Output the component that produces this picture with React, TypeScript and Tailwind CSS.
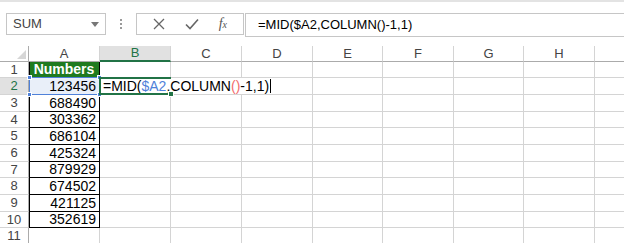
import React from "react";

const colLetters = ["A", "B", "C", "D", "E", "F", "G", "H"];
const colWidths = ["w-[71px]", "w-[71px]", "w-[71px]", "w-[71px]", "w-[70px]", "w-[71px]", "w-[70px]", "w-[71px]"];
const rowHeights = ["h-[16px]", "h-[17px]", "h-[17px]", "h-[16px]", "h-[17px]", "h-[17px]", "h-[16px]", "h-[17px]", "h-[17px]", "h-[16px]", "h-[17px]"];
const values = ["Numbers", "123456", "688490", "303362", "686104", "425324", "879929", "674502", "421125", "352619", ""];

function Toolbar() {
  return (
    <div className="flex items-start pt-[11px] h-[46px] border-t-2 border-[#e3e3e3]">
      <div className="ml-[6px] w-[100px] h-[22px] border border-[#c6c6c6] flex items-center pl-[6px] pr-[6px] text-[13px] text-[#444]">
        <span className="flex-1">SUM</span>
        <svg width="8" height="5" viewBox="0 0 8 5">
          <path d="M0 0h8L4 5z" fill="#777" />
        </svg>
      </div>
      <div className="w-[30px] h-[22px] flex flex-col items-center justify-center gap-[2px]">
        <span className="w-[2px] h-[2px] bg-[#9a9a9a]" />
        <span className="w-[2px] h-[2px] bg-[#9a9a9a]" />
        <span className="w-[2px] h-[2px] bg-[#9a9a9a]" />
      </div>
      <div className="w-[108px] h-[22px] border border-[#c6c6c6] flex items-center justify-around px-[6px]">
        <svg width="12" height="12" viewBox="0 0 12 12">
          <path d="M1 1l10 10M11 1L1 11" stroke="#666" strokeWidth="1.3" />
        </svg>
        <svg width="14" height="12" viewBox="0 0 14 12">
          <path d="M1 6.5l4 4L13 1.5" stroke="#666" strokeWidth="1.6" fill="none" />
        </svg>
        <span className="font-['Liberation_Serif'] italic text-[14px] text-[#555] leading-none">
          f<span className="text-[10px]">x</span>
        </span>
      </div>
      <div className="ml-[1px] flex-1 h-[24px] border-y border-l border-[#c6c6c6] flex items-center pl-[12px] text-[13px] text-black">
        =MID($A2,COLUMN()-1,1)
      </div>
    </div>
  );
}

function HeaderRow() {
  return (
    <div className="flex h-[16px]">
      <div className="w-[29px] shrink-0 border-r border-b border-[#ababab] bg-white flex items-end justify-end p-[2px]">
        <svg width="9" height="9" viewBox="0 0 9 9">
          <path d="M9 0v9H0z" fill="#d6d6d6" />
        </svg>
      </div>
      {colLetters.map((c, i) => {
        const sel = c === "B";
        return (
          <div
            key={c}
            className={`${colWidths[i]} shrink-0 flex items-center justify-center text-[13px] border-r border-[#d4d4d4] ${
              sel ? "bg-[#e1e1e1] text-[#217346] border-b-2 border-b-[#217346]" : "bg-white text-[#444] border-b border-b-[#ababab]"
            }`}
          >
            {c}
          </div>
        );
      })}
      <div className="flex-1 bg-white border-b border-[#ababab]" />
    </div>
  );
}

function Corner({ pos }: { pos: string }) {
  return <span className={`absolute ${pos} w-[5px] h-[5px] bg-[#4f81d9] border border-white z-20`} />;
}

function Row({ idx }: { idx: number }) {
  const r = idx + 1;
  const selRow = r === 2;
  const v = values[idx];
  const inA = r <= 10;
  return (
    <div className={`flex ${rowHeights[idx]}`}>
      <div
        className={`w-[29px] shrink-0 border-r border-r-[#ababab] border-b border-b-[#d4d4d4] flex items-center justify-center text-[13px] ${
          selRow ? "bg-[#e1e1e1] text-[#217346]" : "bg-white text-[#444]"
        }`}
      >
        {r}
      </div>
      <div
        className={`relative w-[71px] shrink-0 flex items-center text-[14px] ${
          inA ? "border-r border-b border-black shadow-[inset_1px_0_0_#000]" : "border-r border-b border-[#d4d4d4]"
        } ${r === 1 ? "bg-[#1f7a1f] text-white font-bold justify-center" : "justify-end pr-[3px] text-black"} ${
          selRow ? "bg-[#e9eff9]" : ""
        }`}
      >
        {v}
        {selRow && (
          <>
            <div className="absolute -top-[1px] left-0 -right-[1px] -bottom-[1px] border border-[#4f81d9] z-10" />
            <Corner pos="-top-[3px] -left-[2px]" />
            <Corner pos="-top-[3px] -right-[3px]" />
            <Corner pos="-bottom-[3px] -left-[2px]" />
            <Corner pos="-bottom-[3px] -right-[3px]" />
          </>
        )}
      </div>
      {colWidths.slice(1).map((w, i) => (
        <div key={i} className={`relative ${w} shrink-0 border-r border-b border-[#d4d4d4] bg-white`}>
          {selRow && i === 0 && (
            <>
              <div className="absolute top-0 left-0 bottom-0 w-[172px] bg-white z-10 flex items-center pl-[3px] text-[14px] text-black whitespace-nowrap">
                =MID(<span className="text-[#4f81d9]">$A2</span>,COLUMN<span className="text-[#f26b6b]">()</span>-1,1)
                <span className="ml-[1px] w-[1px] h-[14px] bg-black" />
              </div>
              <div className="absolute -top-[1px] -left-[1px] w-[72px] h-[18px] border-t-2 border-l-2 border-b-2 border-[#217346] z-20" />
              <span className="absolute -bottom-[3px] left-[68px] w-[6px] h-[6px] bg-[#217346] border border-white z-30" />
            </>
          )}
        </div>
      ))}
      <div className="flex-1 border-b border-[#d4d4d4] bg-white" />
    </div>
  );
}

export default function App() {
  return (
    <div className="w-[624px] h-[243px] overflow-hidden bg-white font-['Liberation_Sans',Arial,sans-serif]">
      <Toolbar />
      <HeaderRow />
      {rowHeights.map((_, i) => (
        <Row key={i} idx={i} />
      ))}
    </div>
  );
}
